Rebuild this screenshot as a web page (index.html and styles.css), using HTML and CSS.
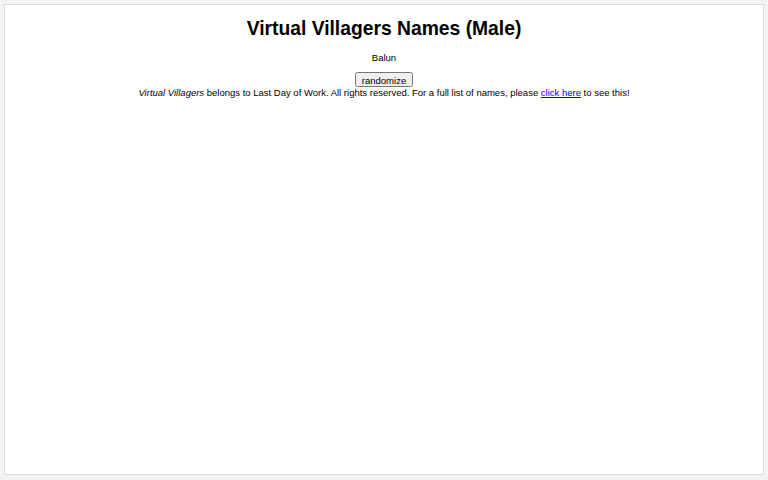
FILE: index.html
```html
<!DOCTYPE html>
<html lang="en">
<head>
    <meta charset="UTF-8">
    <title>Virtual Villagers Names (Male)</title>
    <link rel="stylesheet" href="styles.css">
</head>
<body>
    <div class="page">
        <h1>Virtual Villagers Names (Male)</h1>
        <p class="name" id="name">Balun</p>
        <button class="randomize" onclick="randomize()">randomize</button>
        <p class="credits"><em>Virtual Villagers</em> belongs to Last Day of Work. All rights reserved. For a full list of names, please <a href="#">click here</a> to see this!</p>
    </div>

    <script>
        const names = ["Balun", "Aaron", "Borin", "Cadon", "Darik", "Elrod", "Farin", "Garth", "Hodar", "Jorek"];

        function randomize() {
            const pick = names[Math.floor(Math.random() * names.length)];
            document.getElementById("name").textContent = pick;
        }
    </script>
</body>
</html>
```

FILE: styles.css
```css
* {
    box-sizing: border-box;
}

body {
    margin: 0;
    padding: 4px 4px 5px 4px;
    background: #f3f3f3;
    font-family: 'Liberation Sans', Arial, sans-serif;
    height: 100vh;
}

.page {
    background: #ffffff;
    border: 1px solid #dcdcdc;
    height: 100%;
    text-align: center;
    padding-top: 13px;
}

h1 {
    font-size: 19.3px;
    margin: 0 0 12px;
}

.name {
    font-size: 9.5px;
    margin: 0 0 9px;
}

.randomize {
    display: block;
    margin: 0 auto;
    font-family: 'Liberation Sans', Arial, sans-serif;
    font-size: 9.5px;
    padding: 1px 5px;
    height: 15px;
    line-height: 11px;
}

.credits {
    font-size: 9.5px;
    margin: 0;
}

.credits a {
    color: #0000ee;
}
```
